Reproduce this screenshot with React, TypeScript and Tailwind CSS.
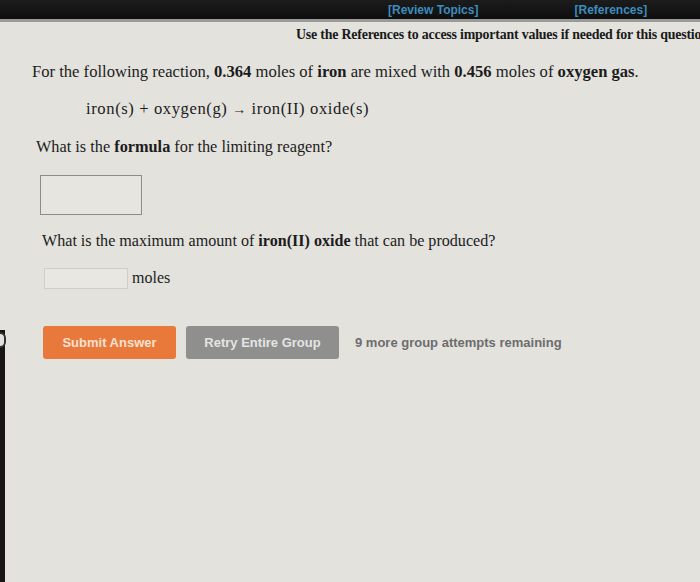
export default function App() {
  const serif = { fontFamily: '"Liberation Serif", "Times New Roman", serif' }
  const sans = { fontFamily: '"Liberation Sans", Arial, sans-serif' }

  return (
    <div className="relative h-[582px] w-[700px] overflow-hidden bg-[#e3e2dd]" style={serif}>
      <div className="flex h-[19px] items-center bg-gradient-to-b from-[#1c1c1c] to-[#0e0e0e] text-[12px] font-bold text-[#3d8cbf]" style={sans}>
        <span className="ml-[388px]">[Review Topics]</span>
        <span className="ml-[96px]">[References]</span>
      </div>
      <div className="h-[3px] bg-[#9a9a98]" />

      <div className="whitespace-nowrap pl-[296px] pt-[3px] text-[13.9px] font-bold tracking-[-0.2px] text-[#1a1a1a]">
        Use the References to access important values if needed for this question.
      </div>

      <div className="whitespace-nowrap pl-[32px] pt-[14px] text-[16.6px] text-[#1c1c1c]">
        For the following reaction, <b>0.364</b> moles of <b>iron</b> are mixed with <b>0.456</b> moles of{' '}
        <b>oxygen gas</b>.
      </div>

      <div className="whitespace-nowrap pl-[86px] pt-[12px] text-[16.6px] tracking-[0.6px] text-[#1c1c1c]">
        iron(s) + oxygen(g) <span className="text-[14px]">→</span> iron(II) oxide(s)
      </div>

      <div className="whitespace-nowrap pl-[36px] pt-[13px] text-[16.3px] text-[#1c1c1c]">
        What is the <b>formula</b> for the limiting reagent?
      </div>

      <div className="ml-[40px] mt-[16px] h-[40px] w-[102px] border border-[#8d8c88] bg-[#e6e5e0]" />

      <div className="whitespace-nowrap pl-[42px] pt-[14px] text-[16.1px] text-[#1c1c1c]">
        What is the maximum amount of <b>iron(II) oxide</b> that can be produced?
      </div>

      <div className="flex items-center pl-[44px] pt-[13px]">
        <div className="h-[21px] w-[84px] border border-[#cfcec9] bg-[#e8e7e2]" />
        <span className="ml-[4px] text-[16px] text-[#1c1c1c]">moles</span>
      </div>

      <div className="flex items-center pl-[43px] pt-[36px]" style={sans}>
        <div className="flex h-[33px] w-[133px] items-center justify-center rounded-[3px] bg-[#e8793a] text-[13px] font-bold text-[#f6e0d2]">
          Submit Answer
        </div>
        <div className="ml-[10px] flex h-[33px] w-[153px] items-center justify-center rounded-[3px] bg-[#8f8f8e] text-[13px] font-bold text-[#e4e4e4]">
          Retry Entire Group
        </div>
        <span className="ml-[16px] text-[13px] font-bold text-[#6d6d6d]">9 more group attempts remaining</span>
      </div>

      <div className="absolute bottom-0 left-0 top-[330px] w-[5px] bg-[#1a1515]" />
      <div className="absolute left-[-6px] top-[332px] h-[16px] w-[12px] rounded-full border-2 border-[#333] bg-[#e3e2dd]" />
    </div>
  )
}
